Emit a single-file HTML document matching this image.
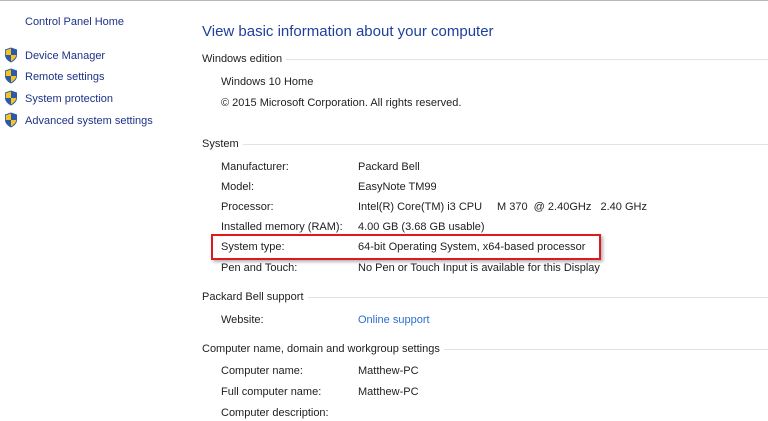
<!DOCTYPE html>
<html><head><style>
body{margin:0;width:768px;height:421px;background:#fff;position:relative;overflow:hidden;font-family:"Liberation Sans",sans-serif;font-size:11px;color:#1e1e1e}
.t{position:absolute;white-space:nowrap;line-height:14px;margin-top:1px}
.top{position:absolute;left:0;top:0;width:768px;height:1px;background:#b8b8b8}
.l{color:#1e3287}
.h{position:absolute;left:202px;right:0;height:14px;line-height:14px;display:flex;align-items:center;margin-top:1px}
.h span{padding-right:4px;white-space:nowrap}
.h i{flex:1;height:1px;background:#e2e2e2}
.sh{position:absolute;left:4px;width:14px;height:16px}
</style></head><body>
<div class="top"></div>
<div class="t l" style="left:25px;top:14px">Control Panel Home</div>
<svg class="sh" style="top:47px" viewBox="0 0 14 16"><path d="M7 0.5L1 2.5V8c0 3.5 3 6 6 7.5 3-1.5 6-4 6-7.5V2.5z" fill="#2a5aa8"/><path d="M7 1.5V8H1.8V3.2zM7 8h5.2c-.3 3-2.7 5-5.2 6.4z" fill="#f5c423"/></svg>
<svg class="sh" style="top:68px" viewBox="0 0 14 16"><path d="M7 0.5L1 2.5V8c0 3.5 3 6 6 7.5 3-1.5 6-4 6-7.5V2.5z" fill="#2a5aa8"/><path d="M7 1.5V8H1.8V3.2zM7 8h5.2c-.3 3-2.7 5-5.2 6.4z" fill="#f5c423"/></svg>
<svg class="sh" style="top:90px" viewBox="0 0 14 16"><path d="M7 0.5L1 2.5V8c0 3.5 3 6 6 7.5 3-1.5 6-4 6-7.5V2.5z" fill="#2a5aa8"/><path d="M7 1.5V8H1.8V3.2zM7 8h5.2c-.3 3-2.7 5-5.2 6.4z" fill="#f5c423"/></svg>
<svg class="sh" style="top:112px" viewBox="0 0 14 16"><path d="M7 0.5L1 2.5V8c0 3.5 3 6 6 7.5 3-1.5 6-4 6-7.5V2.5z" fill="#2a5aa8"/><path d="M7 1.5V8H1.8V3.2zM7 8h5.2c-.3 3-2.7 5-5.2 6.4z" fill="#f5c423"/></svg>
<div class="t l" style="left:25px;top:48px">Device Manager</div>
<div class="t l" style="left:25px;top:69px">Remote settings</div>
<div class="t l" style="left:25px;top:91px">System protection</div>
<div class="t l" style="left:25px;top:113px">Advanced system settings</div>

<div class="t" style="left:202px;top:22px;font-size:15px;line-height:18px;color:#1f3f9c">View basic information about your computer</div>

<div class="h" style="top:51px"><span>Windows edition</span><i></i></div>
<div class="t" style="left:221px;top:74px">Windows 10 Home</div>
<div class="t" style="left:221px;top:95px">© 2015 Microsoft Corporation. All rights reserved.</div>

<div class="h" style="top:136px"><span>System</span><i></i></div>
<div class="t" style="left:221px;top:159px">Manufacturer:</div><div class="t" style="left:358px;top:159px">Packard Bell</div>
<div class="t" style="left:221px;top:179px">Model:</div><div class="t" style="left:358px;top:179px">EasyNote TM99</div>
<div class="t" style="left:221px;top:199px">Processor:</div><div class="t" style="left:358px;top:199px">Intel(R) Core(TM) i3 CPU</div><div class="t" style="left:497px;top:199px">M 370 &nbsp;@ 2.40GHz &nbsp; 2.40 GHz</div>
<div class="t" style="left:221px;top:219px">Installed memory (RAM):</div><div class="t" style="left:358px;top:219px">4.00 GB (3.68 GB usable)</div>
<div style="position:absolute;left:211px;top:234px;width:386px;height:22px;border:2px solid #e0191e;box-shadow:2px 2px 3px rgba(0,0,0,.3)"></div>
<div class="t" style="left:221px;top:239px">System type:</div><div class="t" style="left:358px;top:239px">64-bit Operating System, x64-based processor</div>
<div class="t" style="left:221px;top:260px">Pen and Touch:</div><div class="t" style="left:358px;top:260px">No Pen or Touch Input is available for this Display</div>

<div class="h" style="top:289px"><span>Packard Bell support</span><i></i></div>
<div class="t" style="left:221px;top:312px">Website:</div><div class="t" style="left:358px;top:312px;color:#2a6fd0">Online support</div>

<div class="h" style="top:341px"><span>Computer name, domain and workgroup settings</span><i></i></div>
<div class="t" style="left:221px;top:363px">Computer name:</div><div class="t" style="left:358px;top:363px">Matthew-PC</div>
<div class="t" style="left:221px;top:384px">Full computer name:</div><div class="t" style="left:358px;top:384px">Matthew-PC</div>
<div class="t" style="left:221px;top:405px">Computer description:</div>
</body></html>
